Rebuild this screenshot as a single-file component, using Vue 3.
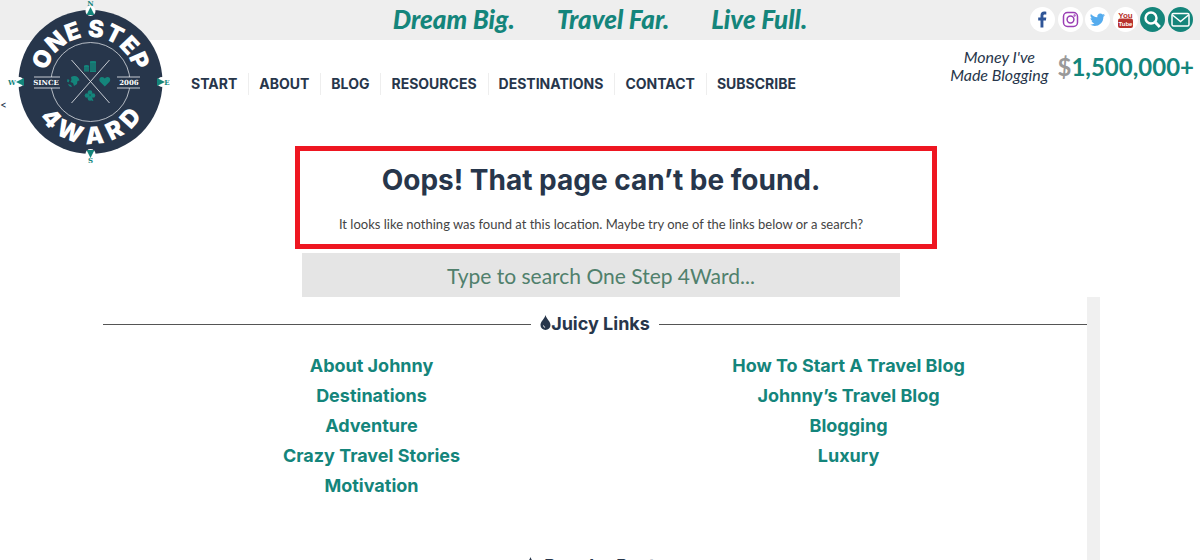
<script setup>
const slogans = ['Dream Big.', 'Travel Far.', 'Live Full.']
const menu = ['START', 'ABOUT', 'BLOG', 'RESOURCES', 'DESTINATIONS', 'CONTACT', 'SUBSCRIBE']
const linkColumns = [
  ['About Johnny', 'Destinations', 'Adventure', 'Crazy Travel Stories', 'Motivation'],
  ['How To Start A Travel Blog', 'Johnny’s Travel Blog', 'Blogging', 'Luxury'],
]
</script>

<template>
  <div class="page">
    <header class="site-header">
      <div class="topbar">
        <p class="slogans">
          <span v-for="s in slogans" :key="s">{{ s }}</span>
        </p>
        <div class="social">
          <a href="#" aria-label="Facebook">
            <svg viewBox="0 0 25 25"><circle cx="12.5" cy="12.5" r="12.5" fill="#fff" /><path d="M10.500 20.500v-7H8.200v-2.900h2.300V8.400c0-2.400 1.400-3.800 3.600-3.800 1 0 1.900.1 2.200.2v2.600h-1.500c-1.200 0-1.400.6-1.400 1.400v1.800h2.900l-.4 2.900h-2.500v7z" fill="#2f5597" /></svg>
          </a>
          <a href="#" aria-label="Instagram">
            <svg viewBox="0 0 25 25" fill="none" stroke="#9b3fb5" stroke-width="1.5"><circle cx="12.5" cy="12.5" r="12.5" fill="#fff" stroke="none" /><rect x="5.5" y="5.5" width="14" height="14" rx="4" /><circle cx="12.5" cy="12.5" r="3.4" /><circle cx="16.6" cy="8.5" r=".4" /></svg>
          </a>
          <a href="#" aria-label="Twitter">
            <svg viewBox="0 0 25 25"><circle cx="12.5" cy="12.5" r="12.5" fill="#fff" /><path d="M20 7.900c-.5.300-1.100.400-1.800.5.700-.4 1.100-1 1.400-1.700-.6.400-1.300.6-2 .8a3.100 3.100 0 0 0-5.300 2.800C9.700 10.200 7.500 9 5.900 7.100c-.8 1.500-.4 3.200 1 4.200-.5 0-1-.2-1.400-.4 0 1.500 1.100 2.800 2.500 3.100-.5.100-.9.100-1.400.1.400 1.200 1.500 2.100 2.900 2.200-1.400 1-2.900 1.500-4.600 1.300 5.900 3.500 13.500 0 13.500-7.900.6-.5 1.200-1 1.600-1.800z" fill="#55acee" /></svg>
          </a>
          <a href="#" aria-label="YouTube">
            <svg viewBox="0 0 25 25"><circle cx="12.5" cy="12.5" r="12.5" fill="#fff" /><text class="yt" x="12.500" y="10.500" fill="#b8322c">You</text><rect x="5" y="11.500" width="15" height="9.500" rx="2" fill="#b8322c" /><text class="yt" x="12.500" y="19" fill="#fff">Tube</text></svg>
          </a>
          <a href="#" aria-label="Search">
            <svg viewBox="0 0 25 25" fill="none" stroke="#fff"><circle cx="12.5" cy="12.5" r="12.5" fill="#14857b" stroke="none" /><circle cx="11" cy="11" r="5.500" stroke-width="2.400" /><path d="M15 15l4.800 5" stroke-width="3" /></svg>
          </a>
          <a href="#" aria-label="Email">
            <svg viewBox="0 0 25 25" fill="none" stroke="#fff" stroke-width="1.500"><circle cx="12.5" cy="12.5" r="12.5" fill="#14857b" stroke="none" /><rect x="4" y="6.500" width="17" height="12.500" rx="1.500" /><path d="M4.500 8l8 6.500 8-6.500" /></svg>
          </a>
        </div>
      </div>

      <div class="header-row">
        <span class="stray">&lt;</span>
        <nav class="menu">
          <a v-for="m in menu" :key="m" href="#">{{ m }}</a>
        </nav>
        <div class="earnings">
          <span class="script">Money I've<br />Made Blogging</span>
          <strong><span class="dollar">$</span>1,500,000+</strong>
        </div>
      </div>

      <a class="logo" href="#" aria-label="One Step 4Ward">
        <svg viewBox="0 0 180 168">
          <defs>
            <path id="arc-top" d="M45.500 82a45 45 0 0 1 90 0" />
            <path id="arc-bottom" d="M28.500 82a62 62 0 0 0 124 0" />
          </defs>
          <circle cx="90.500" cy="82" r="72" fill="#27364b" />
          <g fill="#fff">
            <circle cx="90.500" cy="11" r="5" /><circle cx="90.500" cy="154" r="5" />
            <circle cx="19" cy="82" r="5" /><circle cx="162" cy="82" r="5" />
          </g>
          <g fill="#14857b">
            <path d="M90.500 7l4 8h-8zM90.500 158l4-8h-8zM16 82l8-4v8zM165 82l-8-4v8z" />
            <text class="compass" x="90.500" y="6">N</text>
            <text class="compass" x="90.500" y="163">S</text>
            <text class="compass" x="12" y="85">W</text>
            <text class="compass" x="167" y="85">E</text>
          </g>
          <circle cx="90.500" cy="82" r="39.500" fill="none" stroke="#d9dde2" stroke-width=".8" />
          <path d="M71.500 60l38 43M109.500 60l-38 43" stroke="#d9dde2" stroke-width=".9" />
          <path d="M34 77h26v11H34zM117 77h24v11h-24z" fill="#27364b" />
          <path d="M34 77h26M34 88h26M117 77h23M117 88h23" stroke="#d9dde2" stroke-width=".9" />
          <text class="year" x="46" y="85">SINCE</text>
          <text class="year" x="129" y="85">2006</text>
          <text class="ring"><textPath href="#arc-top" startOffset="50%">ONE STEP</textPath></text>
          <text class="ring lower"><textPath href="#arc-bottom"><tspan x="46 73 102 126 149">4WARD</tspan></textPath></text>
          <g fill="#14857b">
            <path d="M84 66h5v5.500h-5zM90 61.500h6V72h-6z" />
            <ellipse cx="93" cy="62" rx="3" ry="1" /><ellipse cx="86.500" cy="66" rx="2.500" ry="1" />
            <path d="M104.800 86.500l-4.500-4.600c-1.800-2-.7-4.900 1.500-5 1.500-.1 2.400.7 3 1.700.6-1 1.500-1.800 3-1.700 2.200.1 3.300 3 1.500 5z" />
            <path d="M71 77c4-2.400 8-.2 8.500 3.500l-2 .5-.5 3-3 2-1-3-2.500-1 1-2zM67.500 79l2 1-1 2.500-1.500-1zM68 84l3 1 1 2c-2 0-3.400-1-4-3z" />
            <circle cx="90" cy="92.500" r="2.300" /><circle cx="90" cy="98.500" r="2.300" /><circle cx="87" cy="95.500" r="2.300" /><circle cx="93" cy="95.500" r="2.300" />
            <path d="M90 95l3.500 5.500-1.500.5-3-5z" />
          </g>
          <path d="M84 68h12M84 70h12M90 66h6M90 64h6" stroke="#27364b" stroke-width=".4" />
        </svg>
      </a>
    </header>

    <main>
      <section class="not-found">
        <div class="message">
          <h1>Oops! That page can’t be found.</h1>
          <p>It looks like nothing was found at this location. Maybe try one of the links below or a search?</p>
        </div>
        <input type="text" aria-label="Search One Step 4Ward" placeholder="Type to search One Step 4Ward..." />
      </section>

      <section class="content">
        <h2>
          <span class="title"><svg class="drop" viewBox="0 0 11 15"><path d="M5.500 0C6.500 4 10.500 6.500 10.500 10a5 5 0 0 1-10 0C.5 6.500 4.500 4 5.500 0z" fill="#27364b" /><path d="M3.500 10.500c0 1 .6 1.600 1.600 1.700" fill="none" stroke="#fff" /></svg>Juicy Links</span>
        </h2>
        <div class="links">
          <ul v-for="(col, i) in linkColumns" :key="i">
            <li v-for="l in col" :key="l"><a href="#">{{ l }}</a></li>
          </ul>
        </div>
        <h2 class="plain">
          <span class="title"><svg class="drop" viewBox="0 0 11 15"><path d="M5.500 0C6.500 4 10.500 6.500 10.500 10a5 5 0 0 1-10 0C.5 6.500 4.500 4 5.500 0z" fill="#27364b" /></svg>&nbsp; Popular Posts</span>
        </h2>
      </section>
    </main>
  </div>
</template>

<style>
body {
  margin: 0;
  background: #fff;
}
</style>

<style scoped>
.page {
  height: 100vh;
  overflow: hidden;
  font-family: Lato, "Liberation Sans", sans-serif;
  color: #27364b;
}
a {
  color: inherit;
  text-decoration: none;
}
.site-header {
  position: relative;
}
.topbar {
  display: grid;
  grid-template-columns: 1fr auto 1fr;
  align-items: center;
  height: 40px;
  background: #eee;
}
.slogans {
  grid-column: 2;
  display: flex;
  gap: 42px;
  margin: 0;
  padding-bottom: 2px;
  font: italic 900 26px/32px Lato, sans-serif;
  color: #14857b;
}
.social {
  justify-self: end;
  display: flex;
  justify-content: space-between;
  width: 163px;
  margin-right: 7px;
  padding-bottom: 2px;
}
.social a,
.social svg {
  display: block;
  width: 25px;
  height: 25px;
}
.yt {
  font: 700 8px "Liberation Sans", sans-serif;
  text-anchor: middle;
}
rect + .yt {
  font-size: 6px;
}
.header-row {
  display: flex;
  align-items: center;
  height: 88px;
  padding-right: 6px;
}
.stray {
  width: 181px;
  padding-top: 40px;
  font-size: 12px;
}
.menu {
  display: flex;
}
.menu a {
  padding: 0 11px 0 10px;
  border-left: 1px solid #eee;
  font: 700 14px/22px Inter, sans-serif;
}
.menu a:first-child {
  border-left: 0;
}
.earnings {
  display: flex;
  align-items: center;
  gap: 9px;
  margin-left: auto;
  padding-bottom: 36px;
}
.script {
  font-style: italic;
  font-size: 16px;
  line-height: 18px;
  text-align: center;
}
.earnings strong {
  font-size: 24px;
  color: #14857b;
}
.dollar {
  color: #999;
}
.logo {
  position: absolute;
  top: 0;
  left: 0;
}
.logo svg {
  display: block;
  width: 180px;
  height: 168px;
}
.logo text {
  text-anchor: middle;
}
.compass {
  font: 700 7px "DejaVu Serif", serif;
}
.year {
  font: 700 7px "DejaVu Serif", serif;
  fill: #fff;
}
.ring {
  font: 900 24px Inter, sans-serif;
  fill: #fff;
}
.not-found {
  box-sizing: border-box;
  width: 50%;
  margin: 0 auto;
  padding: 20px 0 0 2px;
  text-align: center;
}
.message {
  position: relative;
  height: 105px;
}
.message::after {
  content: "";
  position: absolute;
  inset: -2px -37px 4px -7px;
  border: 5px solid #ee1621;
}
h1 {
  margin: 0;
  padding-top: 12px;
  font: 700 28px/40px Inter, sans-serif;
  white-space: nowrap;
}
.message p {
  margin: 14px 0 0;
  font-size: 13px;
  line-height: 20px;
  color: #444;
  white-space: nowrap;
}
input {
  display: block;
  box-sizing: border-box;
  width: 100%;
  height: 44px;
  border: 0;
  border-radius: 0;
  background: #e5e5e5;
  font: 21px Lato, sans-serif;
  text-align: center;
}
input::placeholder {
  color: #50806c;
  opacity: 1;
}
.content {
  margin: 0 100px 0 103px;
  border-right: 13px solid #f0f0f0;
  padding-bottom: 40px;
}
h2 {
  display: flex;
  align-items: center;
  gap: 9px;
  margin: 0;
  padding-top: 12px;
  font: 700 18px/30px Inter, sans-serif;
}
h2::before,
h2::after {
  content: "";
  flex: 1;
  height: 1px;
  background: #555;
}
.plain::before,
.plain::after {
  background: none;
}
.title {
  display: flex;
  align-items: center;
}
.drop {
  width: 11px;
  height: 15px;
  margin-bottom: 3px;
}
.links {
  display: grid;
  grid-template-columns: 1fr 1fr;
  margin: 12px 0 38px;
  padding-left: 30px;
}
ul {
  margin: 0;
  padding: 0;
  list-style: none;
  text-align: center;
}
li {
  font: 700 18px/30px Inter, sans-serif;
  color: #14857b;
}
</style>
